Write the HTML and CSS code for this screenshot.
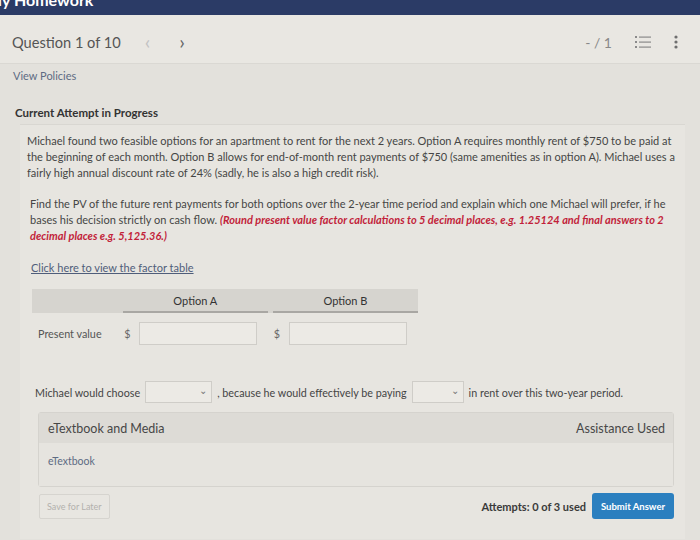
FILE: index.html
```html
<!DOCTYPE html>
<html lang="en">
<head>
  <meta charset="UTF-8">
  <title>My Homework</title>
  <link rel="stylesheet" href="styles.css">
</head>
<body>

<div class="topbar">
  <span class="brand">My Homework</span>
</div>

<div class="qbar">
  <span class="qtitle">Question 1 of 10</span>
  <span class="arrow prev">&lsaquo;</span>
  <span class="arrow next">&rsaquo;</span>
  <div class="qtools">
    <span class="score">- / 1</span>
    <svg class="list-icon" width="16" height="14" viewBox="0 0 16 14">
      <g fill="#8a8a8a">
        <rect x="0" y="1" width="2" height="2"/>
        <rect x="0" y="6" width="2" height="2"/>
        <rect x="0" y="11" width="2" height="2"/>
        <rect x="4" y="1.5" width="12" height="1.2"/>
        <rect x="4" y="6.5" width="12" height="1.2"/>
        <rect x="4" y="11.5" width="12" height="1.2"/>
      </g>
    </svg>
    <svg class="dots-icon" width="4" height="14" viewBox="0 0 4 14">
      <g fill="#6f6f6f">
        <circle cx="2" cy="2" r="1.6"/>
        <circle cx="2" cy="7" r="1.6"/>
        <circle cx="2" cy="12" r="1.6"/>
      </g>
    </svg>
  </div>
</div>

<div class="policies">View Policies</div>

<div class="attempt-title">Current Attempt in Progress</div>

<div class="panel">
  <p class="question">Michael found two feasible options for an apartment to rent for the next 2 years. Option A requires monthly rent of $750 to be paid at the beginning of each month. Option B allows for end-of-month rent payments of $750 (same amenities as in option A). Michael uses a fairly high annual discount rate of 24% (sadly, he is also a high credit risk).</p>

  <p class="question second">Find the PV of the future rent payments for both options over the 2-year time period and explain which one Michael will prefer, if he bases his decision strictly on cash flow. <em class="hint">(Round present value factor calculations to 5 decimal places, e.g. 1.25124 and final answers to 2 decimal places e.g. 5,125.36.)</em></p>

  <a class="factor-link" href="#">Click here to view the factor table</a>

  <div class="pv-table">
    <div class="pv-head">
      <span class="col-label"></span>
      <span class="col-head">Option A</span>
      <span class="col-head">Option B</span>
    </div>
    <div class="pv-row">
      <span class="row-label">Present value</span>
      <span class="cell"><span class="dollar">$</span><span class="input"></span></span>
      <span class="cell"><span class="dollar">$</span><span class="input"></span></span>
    </div>
  </div>

  <div class="choose-line">
    <span>Michael would choose</span>
    <span class="select wide"><span class="caret">&#8964;</span></span>
    <span>, because he would effectively be paying</span>
    <span class="select"><span class="caret">&#8964;</span></span>
    <span>in rent over this two-year period.</span>
  </div>

  <div class="media-box">
    <div class="media-head">
      <span>eTextbook and Media</span>
      <span>Assistance Used</span>
    </div>
    <div class="media-body">eTextbook</div>
  </div>

  <div class="actions">
    <button class="btn-save">Save for Later</button>
    <span class="attempts">Attempts: 0 of 3 used</span>
    <button class="btn-submit">Submit Answer</button>
  </div>
</div>

</body>
</html>
```

FILE: styles.css
```css
body {
  margin: 0;
  font-family: Lato, "Open Sans", sans-serif;
  background: #e3e1dc;
  color: #3d3d3d;
  width: 700px;
  height: 540px;
  overflow: hidden;
}
.topbar {
  height: 15px;
  background: #2b3b66;
  overflow: hidden;
}
.brand {
  display: block;
  margin: -10px 0 0 -13px;
  font-weight: bold;
  font-size: 16px;
  line-height: 20px;
  color: #fff;
}
.qbar {
  box-sizing: border-box;
  height: 49px;
  display: flex;
  align-items: center;
  padding: 6px 12px 0;
  background: #e9e7e2;
  border-bottom: 1px solid #dad8d3;
}
.qtitle {
  font-size: 14.6px;
  color: #555;
}
.arrow {
  font-size: 20px;
  line-height: 20px;
  margin-top: -3px;
}
.prev {
  margin-left: 24px;
  color: #c2c2c2;
}
.next {
  margin-left: 29px;
  color: #666;
}
.qtools {
  margin-left: auto;
  display: flex;
  align-items: center;
  gap: 23px;
  margin-right: 10px;
}
.score {
  font-size: 14px;
  color: #888;
}
.policies {
  padding: 5px 13px 0;
  font-size: 11px;
  color: #5d6b83;
}
.attempt-title {
  margin: 24px 0 0 15px;
  font-size: 11.5px;
  font-weight: bold;
  color: #333;
}
.panel {
  margin: 5px 15px 0 20px;
  padding: 8px 3px 0 7px;
  border-top: 1px solid #d9d7d2;
  background: #e7e5e0;
  height: 406px;
}
.question {
  margin: 0;
  font-size: 11px;
  line-height: 16.2px;
  color: #454545;
}
.question.second {
  margin-top: 14px;
  padding-left: 3px;
  padding-right: 5px;
}
.hint {
  font-weight: bold;
  color: #c21f3a;
}
.factor-link {
  display: inline-block;
  margin: 17px 0 0 4px;
  font-size: 11px;
  color: #4f5d7a;
}
.pv-table {
  margin: 14px 0 0 5px;
  width: 386px;
}
.pv-head {
  display: flex;
  height: 24px;
  align-items: center;
  background: #d6d4cf;
  font-size: 11px;
  color: #333;
}
.col-label {
  width: 88px;
}
.col-head {
  width: 149px;
  text-align: center;
  align-self: stretch;
  line-height: 24px;
  border-bottom: 2px solid #a9a7a3;
  margin-left: 5px;
}
.pv-row {
  display: flex;
  align-items: center;
  margin-top: 9px;
  font-size: 10.8px;
}
.row-label {
  width: 90px;
  padding-left: 6px;
  box-sizing: border-box;
  color: #555;
}
.cell {
  display: flex;
  align-items: center;
  margin-left: 5px;
  width: 149px;
}
.dollar {
  width: 15px;
  color: #666;
}
.input {
  width: 116px;
  height: 21px;
  background: #eceae5;
  border: 1px solid #cfcdc8;
}
.choose-line {
  display: flex;
  align-items: center;
  gap: 5px;
  margin: 36px 0 0 8px;
  font-size: 10.75px;
  color: #444;
}
.select {
  position: relative;
  width: 50px;
  height: 20px;
  background: #eceae5;
  border: 1px solid #cfcdc8;
}
.select.wide {
  width: 65px;
}
.caret {
  position: absolute;
  right: 4px;
  top: 0;
  font-size: 10px;
  line-height: 16px;
  color: #777;
}
.media-box {
  margin: 9px 8px 0 11px;
  border: 1px solid #d5d3ce;
  border-radius: 3px;
}
.media-head {
  display: flex;
  justify-content: space-between;
  align-items: center;
  height: 30px;
  padding: 0 8px 0 9px;
  background: #dddbd6;
  font-size: 12.5px;
  color: #474747;
}
.media-body {
  height: 43px;
  padding: 12px 0 0 9px;
  box-sizing: border-box;
  font-size: 10.5px;
  color: #5d6b83;
  background: #e6e4df;
}
.actions {
  display: flex;
  align-items: center;
  margin: 6px 8px 0 12px;
}
.btn-save {
  height: 25px;
  padding: 0 7px;
  font-family: inherit;
  font-size: 9px;
  color: #b3b1ad;
  background: #e8e6e1;
  border: 1px solid #d6d4cf;
  border-radius: 2px;
}
.attempts {
  margin-left: auto;
  font-size: 11px;
  font-weight: bold;
  color: #3a3a3a;
}
.btn-submit {
  margin-left: 6px;
  width: 82px;
  height: 26px;
  font-family: inherit;
  font-size: 9.5px;
  font-weight: bold;
  color: #fff;
  background: #2b7fbf;
  border: none;
  border-radius: 3px;
}
```
